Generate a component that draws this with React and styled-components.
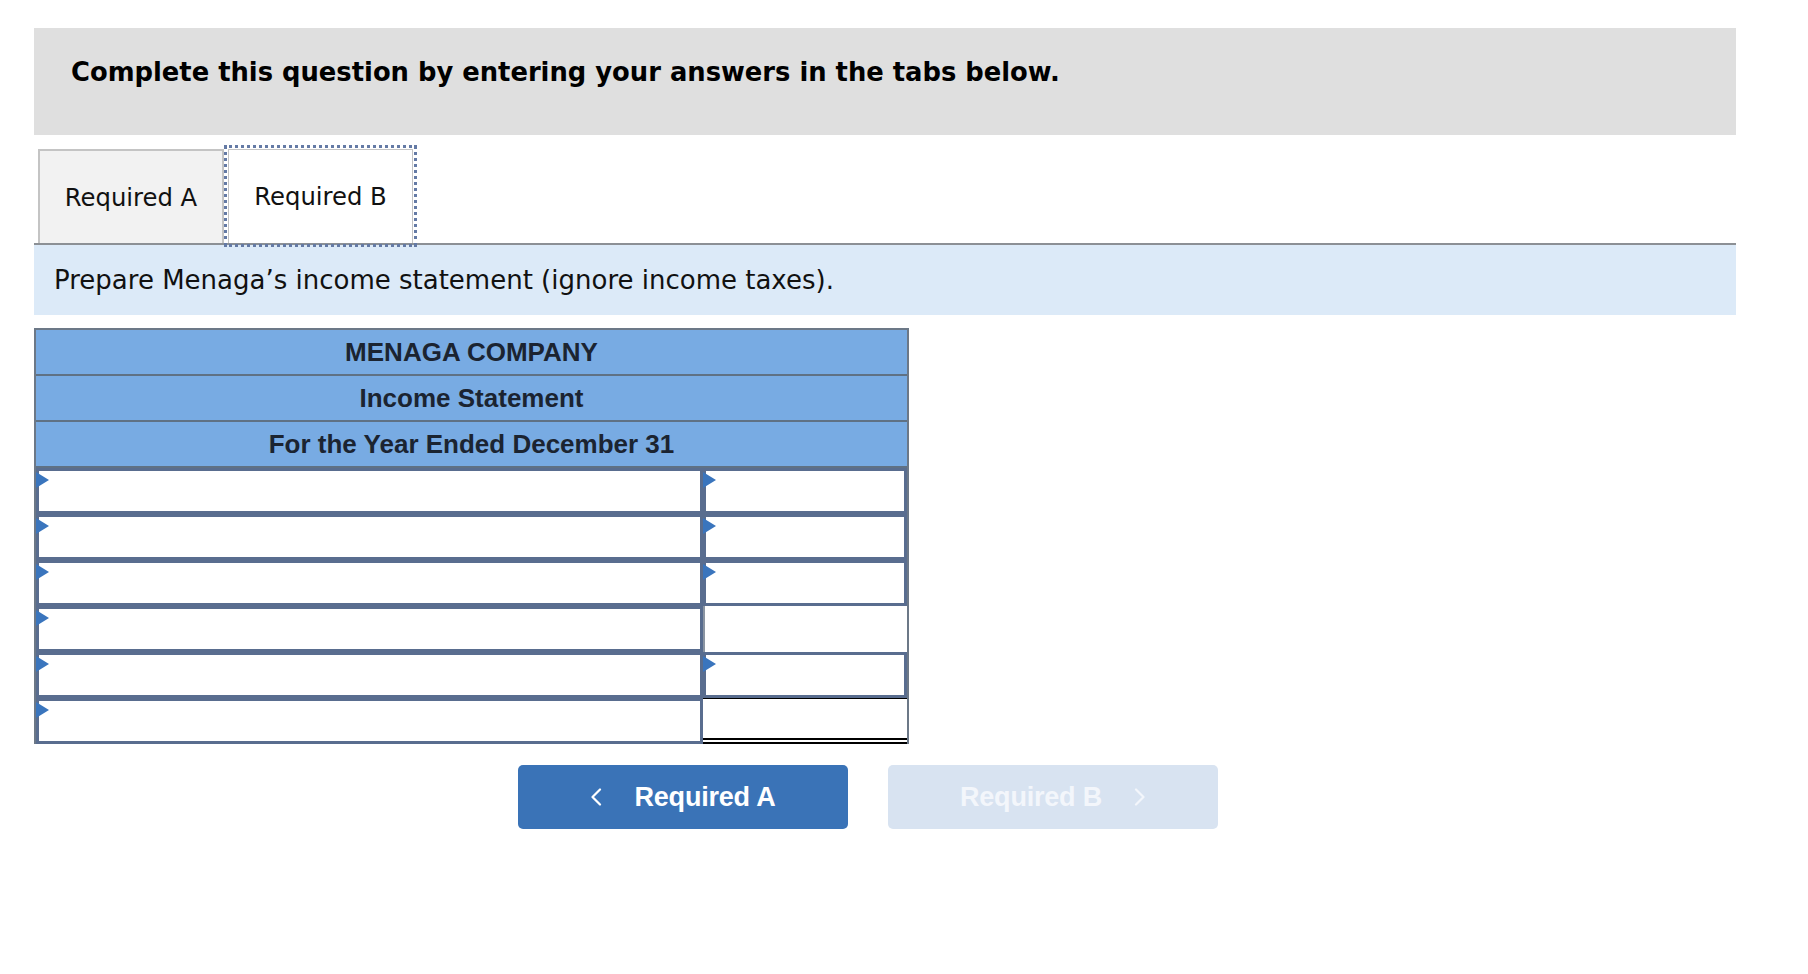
import React from "react";
import styled, {createGlobalStyle} from "styled-components";

const GlobalStyle = createGlobalStyle`
  * {
    box-sizing: border-box;
  }

  body {
    margin: 0;
    background: #fff;
    color: #000;
    font-family: "DejaVu Sans", Verdana, sans-serif;
  }
`;

// right column: input with dropdown marker, blank cell, or the total line
const rows = ["input", "input", "input", "blank", "input", "total"];

const App = () => {
  return (
    <>
      <GlobalStyle/>
      <Container>
        <Banner>
          <h2>Complete this question by entering your answers in the tabs below.</h2>
        </Banner>

        <TabList>
          <Tab>Required A</Tab>
          <Tab $active>Required B</Tab>
        </TabList>

        <Instruction>Prepare Menaga’s income statement (ignore income taxes).</Instruction>

        <Sheet>
          <HeadRow>MENAGA COMPANY</HeadRow>
          <HeadRow>Income Statement</HeadRow>
          <HeadRow>For the Year Ended December 31</HeadRow>
          {rows.map((kind, i) => (
            <DataRow key={i}>
              <Cell>
                <Field type="text" readOnly/>
                <Marker/>
              </Cell>
              {kind === "input" && (
                <Cell>
                  <Field type="text" readOnly/>
                  <Marker/>
                </Cell>
              )}
              {kind === "blank" && <BlankCell/>}
              {kind === "total" && <TotalCell/>}
            </DataRow>
          ))}
        </Sheet>

        <ButtonRow>
          <NavButton type="button">
            <Chevron viewBox="0 0 12 18"><polyline points="10,1.5 2.5,9 10,16.5"/></Chevron>
            Required A
          </NavButton>
          <NavButton type="button" $disabled>
            Required B
            <Chevron viewBox="0 0 12 18"><polyline points="2,1.5 9.5,9 2,16.5"/></Chevron>
          </NavButton>
        </ButtonRow>
      </Container>
    </>
  );
};

const Container = styled.div`
  width: 1702px;
  margin-left: 34px;
  padding-top: 28px;
`;

const Banner = styled.div`
  background: #dfdfdf;
  padding: 29px 37px 48px;

  h2 {
    margin: 0;
    font-size: 25.8px;
    line-height: 30px;
    font-weight: bold;
    color: #000;
  }
`;

const TabList = styled.div`
  display: flex;
  align-items: flex-end;
  margin-top: 10px;
  padding-left: 4px;
  height: 100px;
  border-bottom: 2px solid #8c9095;
`;

const Tab = styled.div`
  display: flex;
  align-items: center;
  justify-content: center;
  height: 94px;
  width: ${p => p.$active ? "185px" : "186px"};
  margin-left: ${p => p.$active ? "4px" : "0"};
  background: ${p => p.$active ? "#fff" : "#f2f2f2"};
  border: ${p => p.$active ? "1px" : "2px"} solid #c4c4c4;
  border-bottom: 0;
  outline: ${p => p.$active ? "3px dotted #647aa5" : "none"};
  outline-offset: 1px;
  font-size: 24.3px;
  color: #111;
  position: relative;
  z-index: 1;
`;

const Instruction = styled.div`
  display: flex;
  align-items: center;
  height: 70px;
  padding: 0 20px;
  background: #dceaf8;
  font-size: 26px;
  color: #111;
`;

const Sheet = styled.div`
  width: 875px;
  margin-top: 13px;
  border: 2px solid #6c7887;
  border-bottom: 0;
  font-family: "Liberation Sans", Arial, sans-serif;
`;

const HeadRow = styled.div`
  display: flex;
  align-items: center;
  justify-content: center;
  height: 46px;
  background: #78abe3;
  border-bottom: 2px solid #5f7184;
  font-size: 26px;
  font-weight: bold;
  color: #1b2431;
`;

const DataRow = styled.div`
  display: grid;
  grid-template-columns: 667px 1fr;
  height: 46px;
`;

const Cell = styled.div`
  position: relative;
`;

const Field = styled.input`
  display: block;
  width: 100%;
  height: 100%;
  margin: 0;
  padding: 0 12px;
  border: 3px solid #596d8f;
  background: #fff;
  outline: 0;
  font: 20px "Liberation Sans", Arial, sans-serif;
`;

const Marker = styled.span`
  position: absolute;
  top: 4px;
  left: 0;
  z-index: 1;
  width: 0;
  height: 0;
  border-left: 13px solid #3a75bd;
  border-top: 8px solid transparent;
  border-bottom: 8px solid transparent;
`;

const BlankCell = styled.div`
  background: #fff;
  border-left: 2px solid #8b95a2;
`;

const TotalCell = styled.div`
  background: #fff;
  border-top: 1px solid #000;
  border-bottom: 6px double #000;
`;

const ButtonRow = styled.div`
  display: flex;
  gap: 40px;
  margin: 21px 0 0 484px;
`;

const NavButton = styled.button`
  display: flex;
  align-items: center;
  justify-content: center;
  gap: 32px;
  width: 330px;
  height: 64px;
  padding: 0;
  border: 0;
  border-radius: 5px;
  background: ${p => p.$disabled ? "#d8e3f1" : "#3a73b7"};
  color: ${p => p.$disabled ? "#f3f6fb" : "#fff"};
  font-family: "Liberation Sans", Arial, sans-serif;
  font-size: 27px;
  font-weight: bold;
  letter-spacing: -0.2px;
  cursor: ${p => p.$disabled ? "default" : "pointer"};
`;

const Chevron = styled.svg`
  width: 12px;
  height: 18px;
  fill: none;
  stroke: currentColor;
  stroke-width: 2.2;
  stroke-linecap: round;
  stroke-linejoin: round;
`;

export default App;
